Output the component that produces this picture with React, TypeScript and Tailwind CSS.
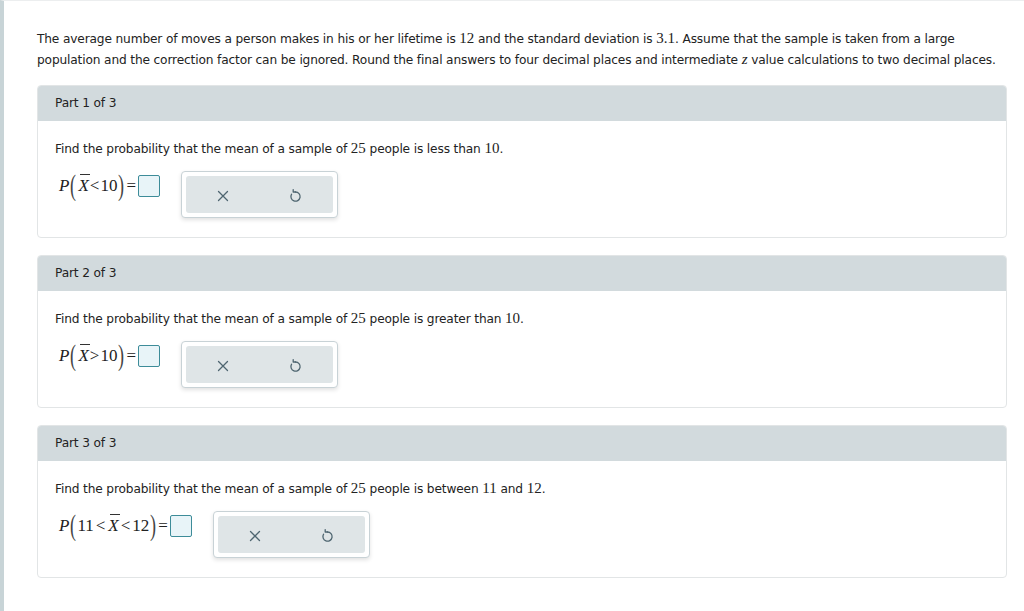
import React from "react";

const sans = "font-['DejaVu_Sans',Verdana,sans-serif]";
const serif = "font-['Liberation_Serif','Times_New_Roman',serif]";

function M({ children, italic }: { children: React.ReactNode; italic?: boolean }) {
  return (
    <span className={`${serif} text-[15px] tracking-normal ${italic ? "italic" : ""}`}>{children}</span>
  );
}

function XIcon() {
  return (
    <svg width="12" height="12" viewBox="0 0 12 12" fill="none" stroke="#4e6570" strokeWidth="1.3" strokeLinecap="round">
      <path d="M1.5 1.5 L10.5 10.5 M10.5 1.5 L1.5 10.5" />
    </svg>
  );
}

function UndoIcon() {
  return (
    <svg width="13" height="15" viewBox="0 0 13 15" fill="none" stroke="#4e6570" strokeWidth="1.3" strokeLinecap="round" strokeLinejoin="round">
      <path d="M6.5 4 A4.6 4.6 0 1 1 2.6 6.2" />
      <path d="M6.5 4 H4.2 M4.2 4 V1.6" />
    </svg>
  );
}

function Bar() {
  return (
    <span className="relative inline-block pl-[1px]">
      <span className="absolute left-[3px] right-[-1px] top-[1px] h-[1px] bg-[#333]" />
      <span className="italic">X</span>
    </span>
  );
}

function Paren({ children }: { children: React.ReactNode }) {
  return (
    <span className="inline-flex items-center">
      <span className="text-[24px] leading-none scale-y-[1.2] scale-x-[0.75] inline-block translate-y-[-1px] text-[#444]">(</span>
      {children}
      <span className="text-[24px] leading-none scale-y-[1.2] scale-x-[0.75] inline-block translate-y-[-1px] text-[#444]">)</span>
    </span>
  );
}

function Formula({ children }: { children: React.ReactNode }) {
  return (
    <div className={`${serif} text-[17px] tracking-normal text-[#222] flex items-center h-[22px] mt-[4px]`}>
      {children}
    </div>
  );
}

function Input() {
  return <div className="w-[22px] h-[22px] border border-[#3d8c99] rounded-[2px] bg-[#e8f4f8] ml-[2px]" />;
}

function Buttons() {
  return (
    <div className="ml-[21px] w-[157px] h-[47px] border border-[#c8d2d6] rounded-[4px] bg-white p-[4px] shadow-[0_2px_4px_rgba(0,0,0,0.12)]">
      <div className="w-full h-full bg-[#dfe5e7] rounded-[3px] flex items-center justify-between px-[31px] pt-[2px]">
        <XIcon />
        <UndoIcon />
      </div>
    </div>
  );
}

function Part({ n, question, formula }: { n: number; question: React.ReactNode; formula: React.ReactNode }) {
  return (
    <div className="border border-[#e2e5e6] rounded-[4px] overflow-hidden bg-white">
      <div className="h-[35px] bg-[#d2dadd] flex items-center pl-[17px] text-[12.2px] tracking-[-0.15px] text-[#222]">
        Part {n} of 3
      </div>
      <div className="pl-[17px] pt-[17px] pb-[19px]">
        <div className="h-[20px] leading-[20px] text-[12.2px] tracking-[-0.15px] text-[#222]">{question}</div>
        <div className="mt-[13px] flex items-start h-[47px]">
          {formula}
        </div>
      </div>
    </div>
  );
}

function Eq() {
  return (
    <>
      <span className="ml-[1px]">=</span>
      <Input />
    </>
  );
}

export default function App() {
  return (
    <div className={`${sans} min-h-[611px] w-[1024px] bg-white border-l-[4px] border-[#c8d4d7] border-t border-t-[#eceeef] text-[#222]`}>
      <div className="pl-[33px] pr-[15px] pt-[27px]">
        <p className="text-[12.2px] leading-[20px] tracking-[-0.15px]">
          The average number of moves a person makes in his or her lifetime is <M>12</M> and the standard deviation is <M>3.1</M>. Assume that the sample is taken from a large population and the correction factor can be ignored. Round the final answers to four decimal places and intermediate <M italic>z</M> value calculations to two decimal places.
        </p>
        <div className="mt-[15px] mr-[2px] flex flex-col gap-[17px]">
          <Part
            n={1}
            question={<>Find the probability that the mean of a sample of <M>25</M> people is less than <M>10</M>.</>}
            formula={
              <>
                <div className="pl-[4px]">
                  <Formula>
                    <span className="italic">P</span>
                    <Paren>
                      <Bar />
                      <span className="mx-[1px]">&lt;</span>
                      <span>10</span>
                    </Paren>
                    <Eq />
                  </Formula>
                </div>
                <Buttons />
              </>
            }
          />
          <Part
            n={2}
            question={<>Find the probability that the mean of a sample of <M>25</M> people is greater than <M>10</M>.</>}
            formula={
              <>
                <div className="pl-[4px]">
                  <Formula>
                    <span className="italic">P</span>
                    <Paren>
                      <Bar />
                      <span className="mx-[1px]">&gt;</span>
                      <span>10</span>
                    </Paren>
                    <Eq />
                  </Formula>
                </div>
                <Buttons />
              </>
            }
          />
          <Part
            n={3}
            question={<>Find the probability that the mean of a sample of <M>25</M> people is between <M>11</M> and <M>12</M>.</>}
            formula={
              <>
                <div className="pl-[4px]">
                  <Formula>
                    <span className="italic">P</span>
                    <Paren>
                      <span>11</span>
                      <span className="mx-[2px]">&lt;</span>
                      <Bar />
                      <span className="mx-[2px]">&lt;</span>
                      <span>12</span>
                    </Paren>
                    <Eq />
                  </Formula>
                </div>
                <Buttons />
              </>
            }
          />
        </div>
      </div>
    </div>
  );
}
